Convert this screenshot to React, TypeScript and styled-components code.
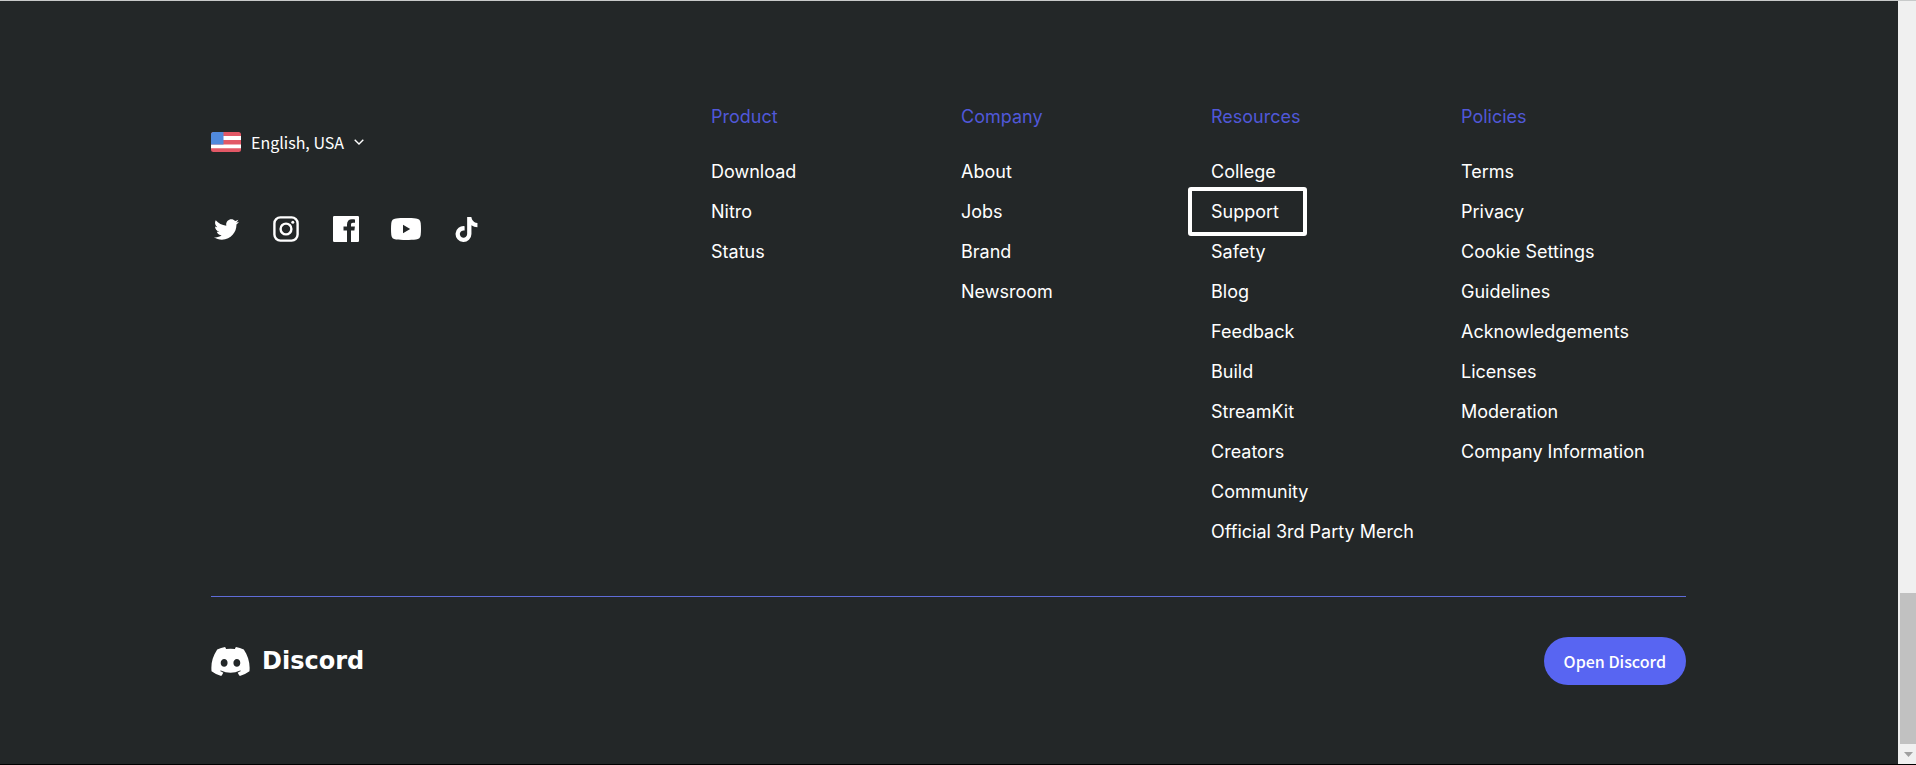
import React from 'react';
import styled, { createGlobalStyle } from 'styled-components';
import { FaTiktok, FaTwitter } from 'react-icons/fa';

const GlobalStyle = createGlobalStyle`
  *, *::before, *::after { box-sizing: border-box; }
  body {
    margin: 0;
    background: #000;
    color: #fff;
    font-family: Inter, 'Liberation Sans', sans-serif;
  }
`;

const labelFont = "'Noto Sans CJK SC', 'Noto Sans', sans-serif";

const Page = styled.div`
  display: flex;
  min-height: 100vh;
  border-top: 1px solid #c8caca;
  border-bottom: 1px solid #000;
`;

const Footer = styled.footer`
  flex: 1;
  min-width: 0;
  padding: 104px 212px 79px 211px;
  background: #232728;
`;

const Top = styled.div`
  display: grid;
  grid-template-columns: repeat(6, 1fr);
  column-gap: 25px;
  padding-bottom: 52px;
  border-bottom: 1px solid #5f6cd8;
`;

const Intro = styled.div`
  grid-column: span 2;
  padding-top: 25px;
`;

const LanguageButton = styled.button`
  display: flex;
  align-items: center;
  height: 24px;
  padding: 0;
  border: 0;
  background: none;
  color: inherit;
  font-family: ${labelFont};
  font-size: 16px;
  line-height: 24px;
  cursor: pointer;
`;

const LanguageName = styled.span`
  margin: 0 10px;
`;

const Socials = styled.nav`
  display: flex;
  gap: 30px;
  margin-top: 60px;
`;

const SocialLink = styled.a`
  display: flex;
  align-items: center;
  justify-content: center;
  width: 30px;
  height: 30px;
  color: #fff;
`;

const Column = styled.nav`
  min-width: 0;
`;

const ColumnTitle = styled.h2`
  margin: 0 0 31px;
  color: #5058d8;
  font-size: 18px;
  font-weight: 400;
  line-height: 24px;
`;

const LinkList = styled.ul`
  display: flex;
  flex-direction: column;
  gap: 16px;
  margin: 0;
  padding: 0;
  list-style: none;
`;

const FooterLink = styled.a<{ $marked?: boolean }>`
  position: relative;
  display: inline-block;
  color: #fff;
  font-size: 18px;
  line-height: 24px;
  text-decoration: none;
  white-space: nowrap;
  vertical-align: top;

  &::after {
    content: '';
    display: ${(p) => (p.$marked ? 'block' : 'none')};
    position: absolute;
    top: -13px;
    left: -23px;
    width: 119px;
    height: 49px;
    border: 4px solid #fff;
    border-radius: 3px;
  }
`;

const Bottom = styled.div`
  display: flex;
  align-items: center;
  justify-content: space-between;
  padding-top: 40px;
`;

const Brand = styled.a`
  display: flex;
  align-items: center;
  gap: 12px;
  color: #fff;
  font-family: 'DejaVu Sans', sans-serif;
  font-size: 24px;
  font-weight: 700;
  line-height: 28px;
  text-decoration: none;
`;

const OpenButton = styled.button`
  height: 48px;
  padding: 0 20px;
  border: 0;
  border-radius: 24px;
  background: #5865f2;
  color: #fff;
  font-family: ${labelFont};
  font-size: 16px;
  font-weight: 500;
  line-height: 24px;
  cursor: pointer;
`;

const ScrollBar = styled.div`
  display: flex;
  flex-direction: column;
  width: 18px;
  padding-left: 2px;
  background: #f0f0f0;
`;

const ScrollSpace = styled.div`
  flex: 1;
`;

const ScrollThumb = styled.div`
  height: 151px;
  background: #c1c1c1;
`;

const ScrollArrow = styled.div`
  display: flex;
  align-items: center;
  justify-content: center;
  height: 20px;
`;

const Flag = () => (
  <svg width="30" height="20" viewBox="0 0 30 20" aria-hidden="true">
    <clipPath id="flag"><rect width="30" height="20" rx="2.5" /></clipPath>
    <g clipPath="url(#flag)">
      <path fill="#e25866" d="M0 0h30v20H0z" />
      <path fill="#fff" d="M12 4h18v4H12zM0 12.5h30v3.7H0z" />
      <path fill="#5089dc" d="M0 0h12.500v12.500H0z" />
    </g>
  </svg>
);

const Chevron = () => (
  <svg width="10" height="6" viewBox="0 0 10 6" fill="none" stroke="#fff" strokeWidth="1.4" aria-hidden="true">
    <path d="M.7.7 5 4.900 9.300.7" />
  </svg>
);

const InstagramIcon = () => (
  <svg width="26" height="26" viewBox="0 0 26 26" fill="none" stroke="#fff" strokeWidth="2.4" aria-hidden="true">
    <rect x="1.4" y="1.4" width="23.2" height="23.2" rx="6" />
    <circle cx="13" cy="13" r="5.4" />
    <circle cx="19.8" cy="6.2" r="1.5" fill="#fff" stroke="none" />
  </svg>
);

const FacebookIcon = () => (
  <svg width="26" height="26" viewBox="0 0 26 26" fill="#fff" aria-hidden="true">
    <path d="M1.200 0h23.600Q26 0 26 1.200v23.600Q26 26 24.800 26H18V14.500h3.400l.5-4H18V8.800c0-1.200.4-2 2-2h2V3.500c-.4 0-1.600-.2-3-.2-3 0-5 1.800-5 5.200v2h-3.500v4H14V26H1.200Q0 26 0 24.800V1.200Q0 0 1.200 0z" />
  </svg>
);

const YoutubeIcon = () => (
  <svg width="30" height="22" viewBox="0 0 30 22" fill="#fff" fillRule="evenodd" aria-hidden="true">
    <path d="M5 .5C10 -.1 20 -.1 25 .5c3 .3 4.400 1.800 4.700 4.500.4 4 .4 8 0 12-.3 2.700-1.700 4.200-4.700 4.500-5 .6-15 .6-20 0-3-.3-4.400-1.800-4.700-4.500-.4-4-.4-8 0-12C.6 2.300 2 .8 5 .5zM12 6.800v8.400l7.200-4.200z" />
  </svg>
);

const DiscordMark = () => (
  <svg width="39" height="29" viewBox="0 0 127.14 96.36" fill="#fff" aria-hidden="true">
    <path d="M107.7,8.07A105.15,105.15,0,0,0,81.47,0a72.06,72.06,0,0,0-3.36,6.83A97.68,97.68,0,0,0,49,6.83,72.37,72.37,0,0,0,45.64,0,105.89,105.89,0,0,0,19.39,8.09C2.79,32.65-1.71,56.6.54,80.21h0A105.73,105.73,0,0,0,32.71,96.36,77.7,77.7,0,0,0,39.6,85.25a68.42,68.42,0,0,1-10.85-5.18c.91-.66,1.8-1.34,2.66-2a75.57,75.57,0,0,0,64.32,0c.87.71,1.76,1.39,2.66,2a68.68,68.68,0,0,1-10.87,5.19,77,77,0,0,0,6.89,11.1A105.25,105.25,0,0,0,126.6,80.22h0C129.24,52.84,122.09,29.11,107.7,8.07ZM42.45,65.69C36.18,65.69,31,60,31,53s5-12.74,11.43-12.74S54,46,53.89,53,48.84,65.69,42.45,65.69Zm42.24,0C78.41,65.69,73.25,60,73.25,53s5-12.74,11.44-12.74S96.23,46,96.12,53,91.08,65.69,84.69,65.69Z" />
  </svg>
);

const columns = [
  { title: 'Product', links: ['Download', 'Nitro', 'Status'] },
  { title: 'Company', links: ['About', 'Jobs', 'Brand', 'Newsroom'] },
  {
    title: 'Resources',
    links: ['College', 'Support', 'Safety', 'Blog', 'Feedback', 'Build', 'StreamKit', 'Creators', 'Community', 'Official 3rd Party Merch'],
  },
  {
    title: 'Policies',
    links: ['Terms', 'Privacy', 'Cookie Settings', 'Guidelines', 'Acknowledgements', 'Licenses', 'Moderation', 'Company Information'],
  },
];

const socials = [
  { name: 'Twitter', icon: <FaTwitter size={25} /> },
  { name: 'Instagram', icon: <InstagramIcon /> },
  { name: 'Facebook', icon: <FacebookIcon /> },
  { name: 'YouTube', icon: <YoutubeIcon /> },
  { name: 'TikTok', icon: <FaTiktok size={25} /> },
];

export default function App() {
  return (
    <>
      <GlobalStyle />
      <Page>
        <Footer>
          <Top>
            <Intro>
              <LanguageButton type="button">
                <Flag />
                <LanguageName>English, USA</LanguageName>
                <Chevron />
              </LanguageButton>
              <Socials aria-label="Social media">
                {socials.map((s) => (
                  <SocialLink key={s.name} href="#" aria-label={s.name}>{s.icon}</SocialLink>
                ))}
              </Socials>
            </Intro>
            {columns.map((c) => (
              <Column key={c.title} aria-label={c.title}>
                <ColumnTitle>{c.title}</ColumnTitle>
                <LinkList>
                  {c.links.map((l) => (
                    <li key={l}>
                      <FooterLink href="#" $marked={l === 'Support'}>{l}</FooterLink>
                    </li>
                  ))}
                </LinkList>
              </Column>
            ))}
          </Top>
          <Bottom>
            <Brand href="#">
              <DiscordMark />
              Discord
            </Brand>
            <OpenButton type="button">Open Discord</OpenButton>
          </Bottom>
        </Footer>
        <ScrollBar aria-hidden="true">
          <ScrollSpace />
          <ScrollThumb />
          <ScrollArrow>
            <svg width="9" height="5" viewBox="0 0 9 5" fill="#a0a0a0"><path d="M0 0h9L4.500 5z" /></svg>
          </ScrollArrow>
        </ScrollBar>
      </Page>
    </>
  );
}
